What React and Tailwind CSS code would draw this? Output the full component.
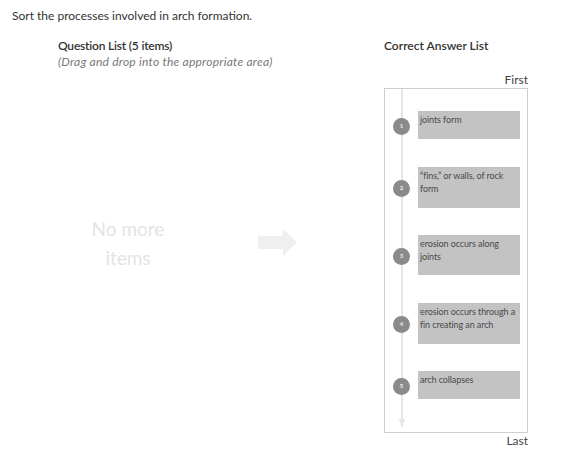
import React from "react";

const items = [
  { n: 1, text: "joints form", h: "h-[28px]" },
  { n: 2, text: "\u201cfins,\u201d or walls, of rock form", h: "h-[41px]" },
  { n: 3, text: "erosion occurs along joints", h: "h-[40px]" },
  { n: 4, text: "erosion occurs through a fin creating an arch", h: "h-[41px]" },
  { n: 5, text: "arch collapses", h: "h-[28px]" },
];

export default function App() {
  return (
    <div className="w-[586px] h-[471px] bg-white pt-2 px-3 text-[#333]" style={{ fontFamily: "Lato, 'Open Sans', sans-serif" }}>
      <p className="text-[12px] leading-[16px]">Sort the processes involved in arch formation.</p>
      <div className="flex mt-[14px] ml-[46px]">
        <div className="w-[326px] flex flex-col">
          <p className="text-[12px] leading-[16px] font-semibold tracking-[-0.2px] text-[#333]">Question List (5 items)</p>
          <p className="text-[12px] leading-[16px] italic tracking-[0.25px] text-[#777]">(Drag and drop into the appropriate area)</p>
          <div className="flex items-center mt-[144px]">
            <div className="w-[140px] text-center text-[19px] leading-[29px] text-[#e4e4e4]">
              No more<br />items
            </div>
            <svg width="40" height="28" viewBox="0 0 40 28" className="ml-[60px]">
              <path d="M0 7 H25 V0 L39 13.5 L25 27 V20 H0 Z" fill="#efefef" />
            </svg>
          </div>
        </div>
        <div className="w-[144px] flex flex-col">
          <p className="text-[12px] leading-[16px] font-semibold text-[#333]">Correct Answer List</p>
          <p className="text-[12px] leading-[16px] text-right text-[#444] mt-[18px]">First</p>
          <div className="relative h-[345px] border border-[#cfcfcf] pt-[22px]">
            <svg className="absolute left-[14px] top-0" width="6" height="342" viewBox="0 0 6 342">
              <rect x="2" y="0" width="2" height="334" fill="#e6e6e6" />
              <path d="M0 330 L6 330 L3 339 Z" fill="#e6e6e6" />
            </svg>
            <div className="relative flex flex-col gap-[27.5px]">
              {items.map((it) => (
                <div key={it.n} className="flex items-center">
                  <div className="w-[33px] flex justify-center pt-[2px]">
                    <div className="w-[17px] h-[17px] rounded-full bg-[#8a8a8a] flex items-center justify-center text-[#eee] text-[6px] font-bold leading-none">
                      {it.n}
                    </div>
                  </div>
                  <div className={`w-[102px] ${it.h} bg-[#c3c3c3] px-[2px] pt-[2px] text-[9px] leading-[13px] tracking-[-0.1px] text-[#4a4a4a]`}>
                    {it.text}
                  </div>
                </div>
              ))}
            </div>
          </div>
          <p className="text-[12px] leading-[16px] text-right text-[#444]">Last</p>
        </div>
      </div>
    </div>
  );
}
